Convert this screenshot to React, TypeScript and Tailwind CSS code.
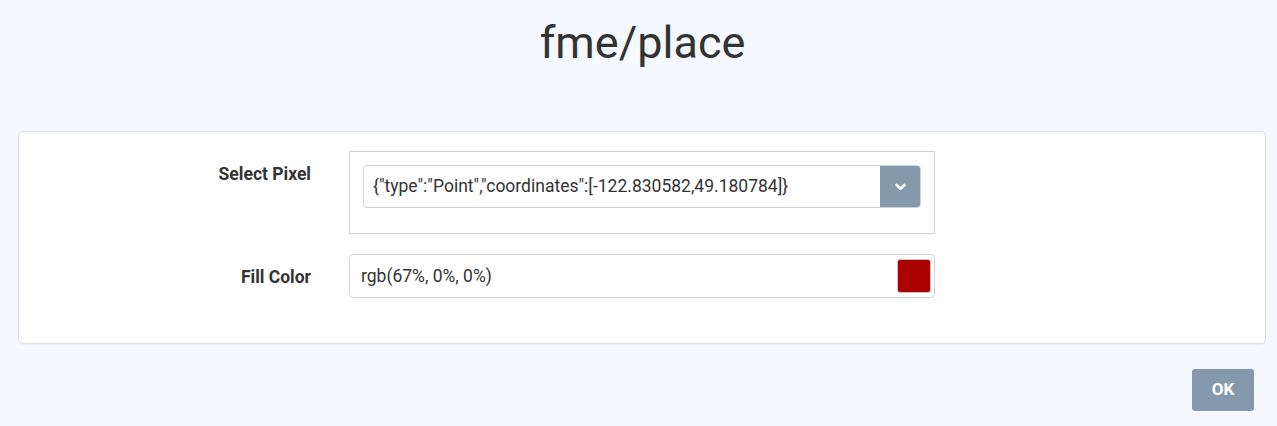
const font = { fontFamily: "Roboto, 'Liberation Sans', sans-serif" };

const ChevronDown = () => (
  <svg width="13" height="12" viewBox="0 0 13 12" fill="none">
    <path
      d="M2.6 4 L6.5 7.8 L10.4 4"
      stroke="white"
      strokeWidth="2.6"
      strokeLinecap="round"
      strokeLinejoin="round"
    />
  </svg>
);

const App = () => {
  return (
    <div
      className="w-[1277px] h-[426px] bg-[#f5f8fe] text-[#333333] flex flex-col overflow-hidden"
      style={font}
    >
      <h1 className="text-center text-[45px] leading-[52px] pt-[17px] pl-[8px] h-[131px] font-normal">
        fme/place
      </h1>
      <div className="ml-[18px] mr-[11px] h-[213px] bg-white border border-[#dcdfe3] rounded-[5px] shadow-[0_1px_1px_rgba(0,0,0,0.04)] pt-[19px]">
        <div className="flex">
          <div className="w-[292px] text-right font-bold text-[17.5px] pt-[10px]">
            Select Pixel
          </div>
          <div className="ml-[38px] w-[586px] h-[83px] border border-[#cfd3d7] px-[13px] pt-[13px]">
            <div className="flex h-[43px] border border-[#cfd3d7] rounded-[4px] overflow-hidden">
              <div className="flex-1 flex items-center pl-[9px] text-[17.5px]">
                {'{"type":"Point","coordinates":[-122.830582,49.180784]}'}
              </div>
              <div className="w-[40px] bg-[#8599ad] flex items-center justify-center">
                <ChevronDown />
              </div>
            </div>
          </div>
        </div>
        <div className="flex mt-[20px]">
          <div className="w-[292px] text-right font-bold text-[17.5px] pt-[10px]">
            Fill Color
          </div>
          <div className="ml-[38px] w-[586px] h-[44px] border border-[#cfd3d7] rounded-[4px] flex items-center pl-[11px] pr-[3px]">
            <span className="flex-1 text-[17.5px]">rgb(67%, 0%, 0%)</span>
            <div className="w-[34px] h-[34px] bg-[#aa0000] rounded-[3px] border border-[#c5c5c5]" />
          </div>
        </div>
      </div>
      <div className="flex justify-end mr-[23px] mt-[25px]">
        <button className="w-[62px] h-[42px] bg-[#8499ae] text-white font-bold text-[17px] rounded-[3px]">
          OK
        </button>
      </div>
    </div>
  );
};

export default App;
